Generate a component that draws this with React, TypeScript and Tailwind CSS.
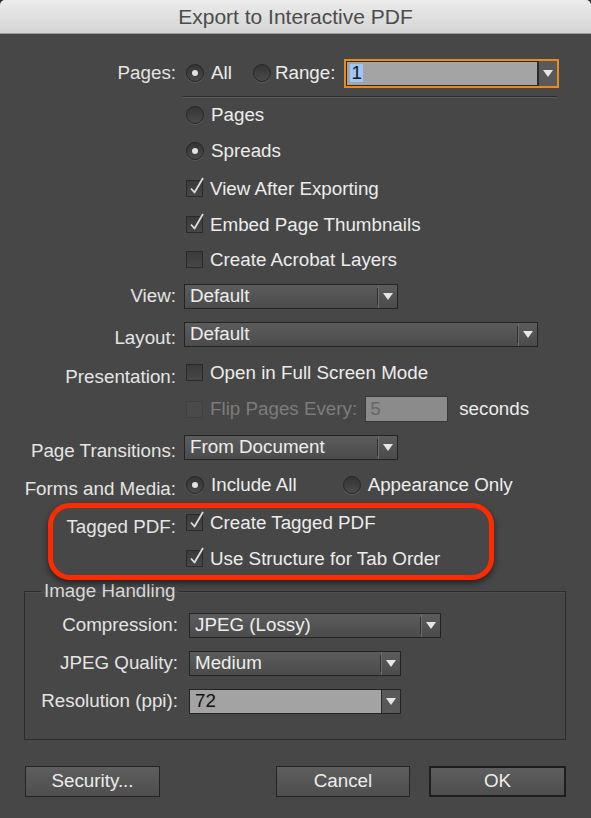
import React from 'react';

const FONT = { fontFamily: '"Liberation Sans", Arial, sans-serif' };

function Label({ text, drop = false, width = 'w-[176px]' }: { text: string; drop?: boolean; width?: string }) {
  return (
    <div className={`${width} shrink-0 text-right text-[#e4e4e4] ${drop ? 'pt-[8px]' : ''}`}>{text}</div>
  );
}

function Radio({ checked = false }: { checked?: boolean }) {
  return (
    <span className="flex h-[18px] w-[18px] shrink-0 items-center justify-center rounded-full border border-[#262626] bg-gradient-to-b from-[#353535] to-[#4a4a4a] shadow-[0_1px_0_rgba(255,255,255,0.12)]">
      {checked && <span className="h-[6px] w-[6px] rounded-full bg-[#e2e2e2]" />}
    </span>
  );
}

function Check({ checked = false, disabled = false }: { checked?: boolean; disabled?: boolean }) {
  return (
    <span
      className={`relative h-[17px] w-[17px] shrink-0 border ${
        disabled ? 'border-[#404040] bg-[#4a4a4a]' : 'border-[#2a2a2a] bg-gradient-to-b from-[#3a3a3a] to-[#474747]'
      }`}
    >
      {checked && (
        <svg className="absolute -top-[5px] left-[1px]" width="17" height="20" viewBox="0 0 17 20">
          <path d="M3 12.5 L6.5 16.5 L15 2" fill="none" stroke="#dcdcdc" strokeWidth="1.8" strokeLinejoin="round" />
        </svg>
      )}
    </span>
  );
}

function Arrow({ dark = false }: { dark?: boolean }) {
  return (
    <div className={`flex h-full w-[19px] items-center justify-center border-l ${dark ? 'border-[#2a2a2a] bg-[#595959]' : 'border-[#6c6c6c]'}`}>
      <svg width="10" height="7" viewBox="0 0 10 7">
        <path d="M0 0 H10 L5 7 Z" fill="#e6e6e6" />
      </svg>
    </div>
  );
}

function Select({ value, width, light = false }: { value: string; width: string; light?: boolean }) {
  return (
    <div
      className={`${width} flex h-[25px] items-stretch border border-[#232323] ${
        light ? 'bg-[#a3a3a3]' : 'bg-gradient-to-b from-[#5c5c5c] to-[#4b4b4b]'
      }`}
    >
      <div className={`flex flex-1 items-center pl-[5px] ${light ? 'text-[#111]' : 'text-[#ededed]'}`}>{value}</div>
      {!light && <div className="my-[3px] w-px bg-[#2f2f2f]" />}
      <Arrow dark={light} />
    </div>
  );
}

function Row({ h, children }: { h: string; children: React.ReactNode }) {
  return <div className={`flex ${h} items-center gap-[8px]`}>{children}</div>;
}

function Option({ children }: { children: React.ReactNode }) {
  return <div className="ml-[2px] flex items-center gap-[7px]">{children}</div>;
}

function Button({ text, width, primary = false }: { text: string; width: string; primary?: boolean }) {
  return (
    <div
      className={`${width} flex h-[31px] items-center justify-center bg-gradient-to-b from-[#5e5e5e] to-[#4e4e4e] text-[#ececec] ${
        primary ? 'border-2 border-[#1e1e1e]' : 'border border-[#232323]'
      }`}
    >
      {text}
    </div>
  );
}

export default function App() {
  return (
    <div className="h-[818px] w-[591px] bg-[#2a2a2a]" style={FONT}>
      <div className="h-full overflow-hidden rounded-t-[5px] bg-[#474747] text-[18.8px] leading-none text-[#ececec]">
        {/* title bar */}
        <div className="flex h-[34px] items-center justify-center border-b border-[#9a9a9a] bg-gradient-to-b from-[#ececec] to-[#d4d4d4] text-[21px] text-[#4c4c4c]">
          Export to Interactive PDF
        </div>

        <div className="pt-[24px]">
          <Row h="h-[30px]">
            <Label text="Pages:" />
            <Option>
              <Radio checked />
              <span>All</span>
            </Option>
            <div className="ml-[13px] flex items-center gap-[4px]">
              <Radio />
              <span>Range:</span>
            </div>
            <div className="ml-[1px] flex h-[29px] w-[215px] items-stretch border-2 border-[#e88a1c]">
              <div className="flex flex-1 items-center border border-[#2a2a2a] bg-[#a4a4a4] pl-[3px]">
                <span className="bg-[#9ec6f6] px-[1px] text-[#1a1a1a]">1</span>
              </div>
              <Arrow dark />
            </div>
          </Row>

          <div className="ml-[183px] mr-[34px] mt-[8px] h-px bg-[#2c2c2c] shadow-[0_1px_0_rgba(255,255,255,0.1)]" />

          <Row h="h-[36px]">
            <Label text="" />
            <Option>
              <Radio />
              <span>Pages</span>
            </Option>
          </Row>
          <Row h="h-[36px]">
            <Label text="" />
            <Option>
              <Radio checked />
              <span>Spreads</span>
            </Option>
          </Row>
          <Row h="h-[40px]">
            <Label text="" />
            <Option>
              <Check checked />
              <span>View After Exporting</span>
            </Option>
          </Row>
          <Row h="h-[32px]">
            <Label text="" />
            <Option>
              <Check checked />
              <span>Embed Page Thumbnails</span>
            </Option>
          </Row>
          <Row h="h-[38px]">
            <Label text="" />
            <Option>
              <Check />
              <span>Create Acrobat Layers</span>
            </Option>
          </Row>
          <Row h="h-[34px]">
            <Label text="View:" />
            <Select value="Default" width="w-[214px]" />
          </Row>
          <Row h="h-[42px]">
            <Label text="Layout:" drop />
            <Select value="Default" width="w-[354px]" />
          </Row>
          <Row h="h-[36px]">
            <Label text="Presentation:" drop />
            <Option>
              <Check />
              <span>Open in Full Screen Mode</span>
            </Option>
          </Row>
          <Row h="h-[36px]">
            <Label text="" />
            <Option>
              <Check disabled />
              <span className="text-[#7c7c7c]">Flip Pages Every:</span>
              <div className="ml-[1px] flex h-[26px] w-[83px] items-center border border-[#383838] bg-[#8b8b8b] pl-[4px] text-[#666]">
                5
              </div>
              <span className="ml-[4px]">seconds</span>
            </Option>
          </Row>
          <Row h="h-[40px]">
            <Label text="Page Transitions:" drop />
            <Select value="From Document" width="w-[214px]" />
          </Row>
          <Row h="h-[36px]">
            <Label text="Forms and Media:" drop />
            <Option>
              <Radio checked />
              <span>Include All</span>
            </Option>
            <div className="ml-[38px] flex items-center gap-[7px]">
              <Radio />
              <span>Appearance Only</span>
            </div>
          </Row>

          {/* tagged pdf group with the red callout */}
          <div className="relative">
            <Row h="h-[40px]">
              <Label text="Tagged PDF:" drop />
              <Option>
                <Check checked />
                <span>Create Tagged PDF</span>
              </Option>
            </Row>
            <Row h="h-[32px]">
              <Label text="" />
              <Option>
                <Check checked />
                <span>Use Structure for Tab Order</span>
              </Option>
            </Row>
            <div className="pointer-events-none absolute left-[48px] top-0 h-[77px] w-[446px] rounded-[22px] border-[5px] border-[#ff2a00] shadow-[0_3px_6px_rgba(0,0,0,0.55)]" />
          </div>

          <fieldset className="mx-[24px] mt-[5px] w-[542px] border border-[#2c2c2c] pb-[18px] pt-[4px] shadow-[inset_0_1px_0_rgba(255,255,255,0.06)]">
            <legend className="ml-[16px] px-[3px] leading-[22px] text-[#d8d8d8]">Image Handling</legend>
            <div className="flex h-[38px] items-center gap-[11px]">
              <Label text="Compression:" width="w-[153px]" />
              <Select value="JPEG (Lossy)" width="w-[252px]" />
            </div>
            <div className="flex h-[38px] items-center gap-[11px]">
              <Label text="JPEG Quality:" width="w-[153px]" />
              <Select value="Medium" width="w-[212px]" />
            </div>
            <div className="flex h-[39px] items-center gap-[11px]">
              <Label text="Resolution (ppi):" width="w-[153px]" />
              <Select value="72" width="w-[212px]" light />
            </div>
          </fieldset>

          <div className="mt-[26px] flex items-center pl-[25px] pr-[25px]">
            <Button text="Security..." width="w-[135px]" />
            <div className="flex-1" />
            <Button text="Cancel" width="w-[134px]" />
            <div className="w-[19px]" />
            <Button text="OK" width="w-[137px]" primary />
          </div>
        </div>
      </div>
    </div>
  );
}
